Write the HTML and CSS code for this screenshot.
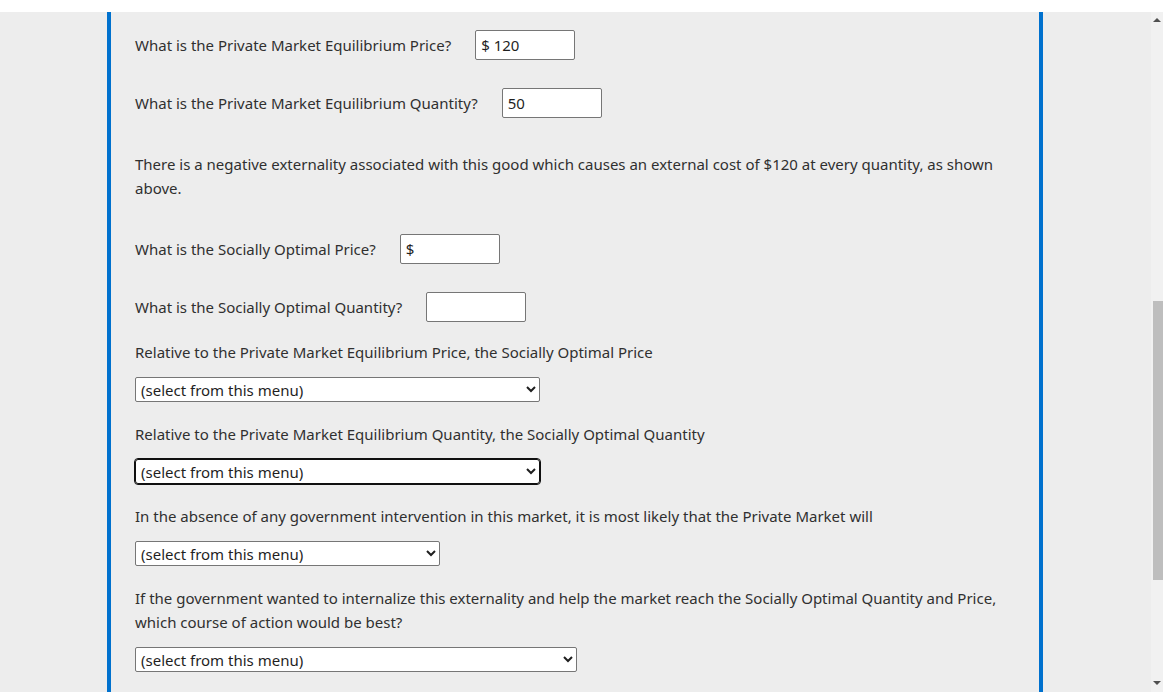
FILE: index.html
```html
<!DOCTYPE html>
<html lang="en">
<head>
<meta charset="utf-8">
<title>Externality question</title>
<link rel="stylesheet" href="styles.css">
</head>
<body>
<div class="topstrip"></div>
<div class="viewport">
  <div class="content">
    <div class="panel">
      <div class="q-row first">
        <span class="label">What is the Private Market Equilibrium Price?</span>
        <input class="box" type="text" value="$ 120">
      </div>
      <div class="q-row">
        <span class="label">What is the Private Market Equilibrium Quantity?</span>
        <input class="box" type="text" value="50">
      </div>
      <p class="para">There is a negative externality associated with this good which causes an external cost of $120 at every quantity, as shown above.</p>
      <div class="q-row after-para">
        <span class="label">What is the Socially Optimal Price?</span>
        <input class="box" type="text" value="$">
      </div>
      <div class="q-row">
        <span class="label">What is the Socially Optimal Quantity?</span>
        <input class="box" type="text" value="">
      </div>
      <p class="prompt first-prompt">Relative to the Private Market Equilibrium Price, the Socially Optimal Price</p>
      <select class="menu w405"><option>(select from this menu)</option></select>
      <p class="prompt">Relative to the Private Market Equilibrium Quantity, the Socially Optimal Quantity</p>
      <select class="menu w405 focused"><option>(select from this menu)</option></select>
      <p class="prompt">In the absence of any government intervention in this market, it is most likely that the Private Market will</p>
      <select class="menu w305"><option>(select from this menu)</option></select>
      <p class="prompt">If the government wanted to internalize this externality and help the market reach the Socially Optimal Quantity and Price, which course of action would be best?</p>
      <select class="menu w442"><option>(select from this menu)</option></select>
    </div>
  </div>
  <div class="scrollbar">
    <div class="arrow up"></div>
    <div class="thumb"></div>
    <div class="spacer"></div>
    <div class="arrow down"></div>
  </div>
</div>
</body>
</html>
```

FILE: styles.css
```css
html, body {
  margin: 0;
  padding: 0;
  height: 100%;
  overflow: hidden;
}
body {
  background: #ffffff;
  font-family: "Noto Sans", "Open Sans", sans-serif;
  font-size: 15px;
  color: #303030;
  display: flex;
  flex-direction: column;
}
.topstrip {
  height: 12px;
  flex: none;
  background: #ffffff;
}
.viewport {
  flex: 1;
  display: flex;
  min-height: 0;
}
.content {
  flex: 1;
  background: #ededed;
  padding-left: 107px;
  padding-right: 108px;
  overflow: hidden;
}
.panel {
  border-left: 4px solid #0071ce;
  border-right: 4px solid #0071ce;
  height: 100%;
  padding: 18px 24px 0 24px;
  box-sizing: border-box;
}
.q-row {
  display: flex;
  align-items: center;
  gap: 24px;
  height: 30px;
  margin-top: 28px;
}
.q-row.first { margin-top: 0; }
.q-row.after-para { margin-top: 34px; }
.label {
  line-height: 24px;
}
.box {
  box-sizing: border-box;
  width: 100px;
  height: 30px;
  border: 1px solid #767676;
  border-radius: 2px;
  background: #ffffff;
  padding: 0 5px;
  font-family: inherit;
  font-size: 15px;
  color: #1f1f1f;
  outline: none;
}
.para {
  margin: 34px 0 0 0;
  line-height: 24px;
}
.prompt {
  margin: 20px 0 0 0;
  line-height: 24px;
}
.prompt.first-prompt { margin-top: 18px; }
.menu {
  display: block;
  box-sizing: border-box;
  height: 25px;
  margin-top: 13px;
  border: 1px solid #767676;
  border-radius: 2px;
  background: #ffffff;
  font-family: inherit;
  font-size: 15px;
  color: #1f1f1f;
  padding: 0 1px;
}
.menu.focused {
  border-color: #101010;
  outline: 1px solid #101010;
  outline-offset: 0;
  border-radius: 3px;
}
.w405 { width: 405px; }
.w305 { width: 305px; }
.w442 { width: 442px; }
.scrollbar {
  flex: none;
  width: 12px;
  background: #f1f1f1;
  display: flex;
  flex-direction: column;
  align-items: flex-end;
}
.arrow {
  width: 0;
  height: 0;
  border-left: 4px solid transparent;
  border-right: 4px solid transparent;
  margin-right: 2px;
}
.arrow.up {
  border-bottom: 4px solid #505050;
  margin-top: 6px;
}
.arrow.down {
  border-top: 4px solid #505050;
  margin-bottom: 7px;
}
.thumb {
  width: 10px;
  height: 279px;
  margin-top: 279px;
  background: #bebebe;
}
.spacer { flex: 1; }
```
